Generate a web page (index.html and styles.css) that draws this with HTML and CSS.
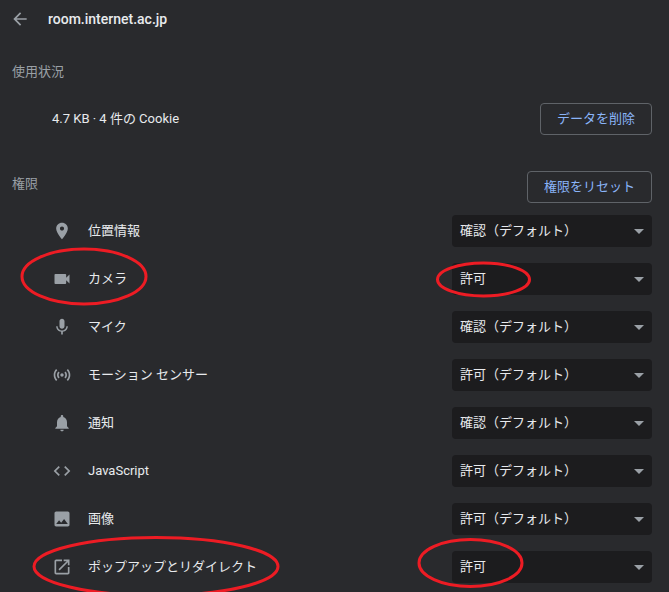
FILE: index.html
```html
<!DOCTYPE html>
<html lang="ja">
<head>
    <meta charset="UTF-8">
    <title>room.internet.ac.jp</title>
    <link rel="stylesheet" href="styles.css">
</head>
<body>

<div class="page">
    <div class="site-header">
        <svg class="back-icon" viewBox="0 0 24 24"><path d="M20 11H7.83l5.59-5.59L12 4l-8 8 8 8 1.41-1.41L7.83 13H20v-2z"/></svg>
        <div class="site-name">room.internet.ac.jp</div>
    </div>

    <div class="section-title usage-title">使用状況</div>
    <div class="usage-row">
        <div class="usage-text">4.7 KB · 4 件の Cookie</div>
        <div class="button">データを削除</div>
    </div>

    <div class="perm-head">
        <div class="section-title">権限</div>
        <div class="button">権限をリセット</div>
    </div>

    <div class="perm-row">
        <svg class="perm-icon" viewBox="0 0 24 24"><path d="M12 2C8.13 2 5 5.13 5 9c0 5.25 7 13 7 13s7-7.75 7-13c0-3.87-3.13-7-7-7zm0 9.5c-1.38 0-2.5-1.12-2.5-2.5s1.12-2.5 2.5-2.5 2.5 1.12 2.5 2.5-1.12 2.5-2.5 2.5z"/></svg>
        <div class="perm-label">位置情報</div>
        <div class="select">確認（デフォルト）</div>
    </div>
    <div class="perm-row">
        <svg class="perm-icon" viewBox="0 0 24 24"><path d="M17 10.5V7c0-.55-.45-1-1-1H4c-.55 0-1 .45-1 1v10c0 .55.45 1 1 1h12c.55 0 1-.45 1-1v-3.5l4 4v-11l-4 4z"/></svg>
        <div class="perm-label">カメラ</div>
        <div class="select">許可</div>
    </div>
    <div class="perm-row">
        <svg class="perm-icon" viewBox="0 0 24 24"><path d="M12 14c1.66 0 2.99-1.34 2.99-3L15 5c0-1.66-1.34-3-3-3S9 3.34 9 5v6c0 1.66 1.34 3 3 3zm5.3-3c0 3-2.54 5.1-5.3 5.1S6.7 14 6.7 11H5c0 3.41 2.72 6.23 6 6.72V21h2v-3.28c3.28-.48 6-3.3 6-6.72h-1.7z"/></svg>
        <div class="perm-label">マイク</div>
        <div class="select">確認（デフォルト）</div>
    </div>
    <div class="perm-row">
        <svg class="perm-icon" viewBox="0 0 24 24"><path d="M7.76 16.24C6.67 15.16 6 13.66 6 12s.67-3.16 1.76-4.24l1.42 1.42C8.45 9.9 8 10.9 8 12c0 1.1.45 2.1 1.17 2.83l-1.41 1.41zm8.48 0C17.33 15.16 18 13.66 18 12s-.67-3.16-1.76-4.24l-1.42 1.42C15.55 9.9 16 10.9 16 12c0 1.1-.45 2.1-1.17 2.83l1.41 1.41zM12 10c-1.1 0-2 .9-2 2s.9 2 2 2 2-.9 2-2-.9-2-2-2zm8 2c0 2.21-.9 4.21-2.35 5.65l1.42 1.42C20.88 17.26 22 14.76 22 12s-1.12-5.26-2.93-7.07l-1.42 1.42C19.1 7.79 20 9.79 20 12zM6.35 6.35L4.93 4.93C3.12 6.74 2 9.24 2 12s1.12 5.26 2.93 7.07l1.42-1.42C4.9 16.21 4 14.21 4 12s.9-4.21 2.35-5.65z"/></svg>
        <div class="perm-label">モーション センサー</div>
        <div class="select">許可（デフォルト）</div>
    </div>
    <div class="perm-row">
        <svg class="perm-icon" viewBox="0 0 24 24"><path d="M12 22c1.1 0 2-.9 2-2h-4c0 1.1.9 2 2 2zm6-6v-5c0-3.07-1.63-5.64-4.5-6.32V4c0-.83-.67-1.5-1.5-1.5s-1.5.67-1.5 1.5v.68C7.64 5.36 6 7.92 6 11v5l-2 2v1h16v-1l-2-2z"/></svg>
        <div class="perm-label">通知</div>
        <div class="select">確認（デフォルト）</div>
    </div>
    <div class="perm-row">
        <svg class="perm-icon" viewBox="0 0 24 24"><path d="M9.4 16.6L4.8 12l4.6-4.6L8 6l-6 6 6 6 1.4-1.4zm5.2 0l4.6-4.6-4.6-4.6L16 6l6 6-6 6-1.4-1.4z"/></svg>
        <div class="perm-label">JavaScript</div>
        <div class="select">許可（デフォルト）</div>
    </div>
    <div class="perm-row">
        <svg class="perm-icon" viewBox="0 0 24 24"><path d="M21 19V5c0-1.1-.9-2-2-2H5c-1.1 0-2 .9-2 2v14c0 1.1.9 2 2 2h14c1.1 0 2-.9 2-2zM8.5 13.5l2.5 3.01L14.5 12l4.5 6H5l3.5-4.5z"/></svg>
        <div class="perm-label">画像</div>
        <div class="select">許可（デフォルト）</div>
    </div>
    <div class="perm-row">
        <svg class="perm-icon" viewBox="0 0 24 24"><path d="M19 19H5V5h7V3H5c-1.11 0-2 .9-2 2v14c0 1.1.89 2 2 2h14c1.1 0 2-.9 2-2v-7h-2v7zM14 3v2h3.59l-9.83 9.83 1.41 1.41L19 6.41V10h2V3h-7z"/></svg>
        <div class="perm-label">ポップアップとリダイレクト</div>
        <div class="select">許可</div>
    </div>

    <!-- red marks drawn on top of the screenshot -->
    <svg class="marks" viewBox="0 0 669 592">
        <ellipse cx="84" cy="276.5" rx="62" ry="27.5"/>
        <ellipse cx="483.5" cy="279.5" rx="46" ry="16.5"/>
        <ellipse cx="156" cy="566.5" rx="122" ry="29"/>
        <ellipse cx="470.5" cy="563" rx="51.5" ry="23.5"/>
    </svg>
</div>

</body>
</html>
```

FILE: styles.css
```css
html, body {
    margin: 0;
    padding: 0;
    height: 100%;
    overflow: hidden;
}
body {
    font-family: Roboto, 'Noto Sans CJK JP', sans-serif;
    font-size: 13px;
    background-color: #292a2d;
    color: #e8eaed;
}
.page {
    position: relative;
    height: 592px;
    overflow: hidden;
}
.site-header {
    display: flex;
    align-items: center;
    height: 38px;
    padding-left: 10px;
}
.back-icon {
    width: 20px;
    height: 20px;
    fill: #9aa0a6;
}
.site-name {
    margin-left: 18px;
    font-size: 14px;
    font-weight: 500;
}
.section-title {
    color: #9aa0a6;
    line-height: 26px;
    padding-left: 12px;
}
.usage-title {
    margin-top: 21px;
}
.usage-row {
    display: flex;
    align-items: center;
    justify-content: space-between;
    height: 32px;
    margin-top: 18px;
    padding: 0 17px 0 52px;
}
.usage-text {
    line-height: 20px;
}
.button {
    box-sizing: border-box;
    height: 32px;
    line-height: 30px;
    padding: 0 16px;
    color: #8ab4f8;
    border: 1px solid #5f6368;
    border-radius: 4px;
}
.perm-head {
    display: flex;
    align-items: flex-start;
    justify-content: space-between;
    height: 32px;
    margin-top: 36px;
    padding-right: 17px;
}
.perm-row {
    display: flex;
    align-items: center;
    height: 48px;
    padding: 0 17px 0 52px;
}
.perm-head + .perm-row {
    margin-top: 4px;
}
.perm-icon {
    width: 20px;
    height: 20px;
    fill: #9aa0a6;
    flex-shrink: 0;
}
.perm-label {
    flex: 1;
    margin-left: 16px;
    line-height: 20px;
}
.select {
    position: relative;
    box-sizing: border-box;
    width: 200px;
    height: 32px;
    line-height: 32px;
    padding-left: 8px;
    background-color: #1c1c1e;
    border-radius: 4px;
}
.select::after {
    content: '';
    position: absolute;
    right: 8px;
    top: 14px;
    border-left: 5px solid transparent;
    border-right: 5px solid transparent;
    border-top: 5px solid #9aa0a6;
}
.marks {
    position: absolute;
    left: 0;
    top: 0;
    width: 669px;
    height: 592px;
}
.marks ellipse {
    fill: none;
    stroke: #ed1c24;
    stroke-width: 3;
}
```
